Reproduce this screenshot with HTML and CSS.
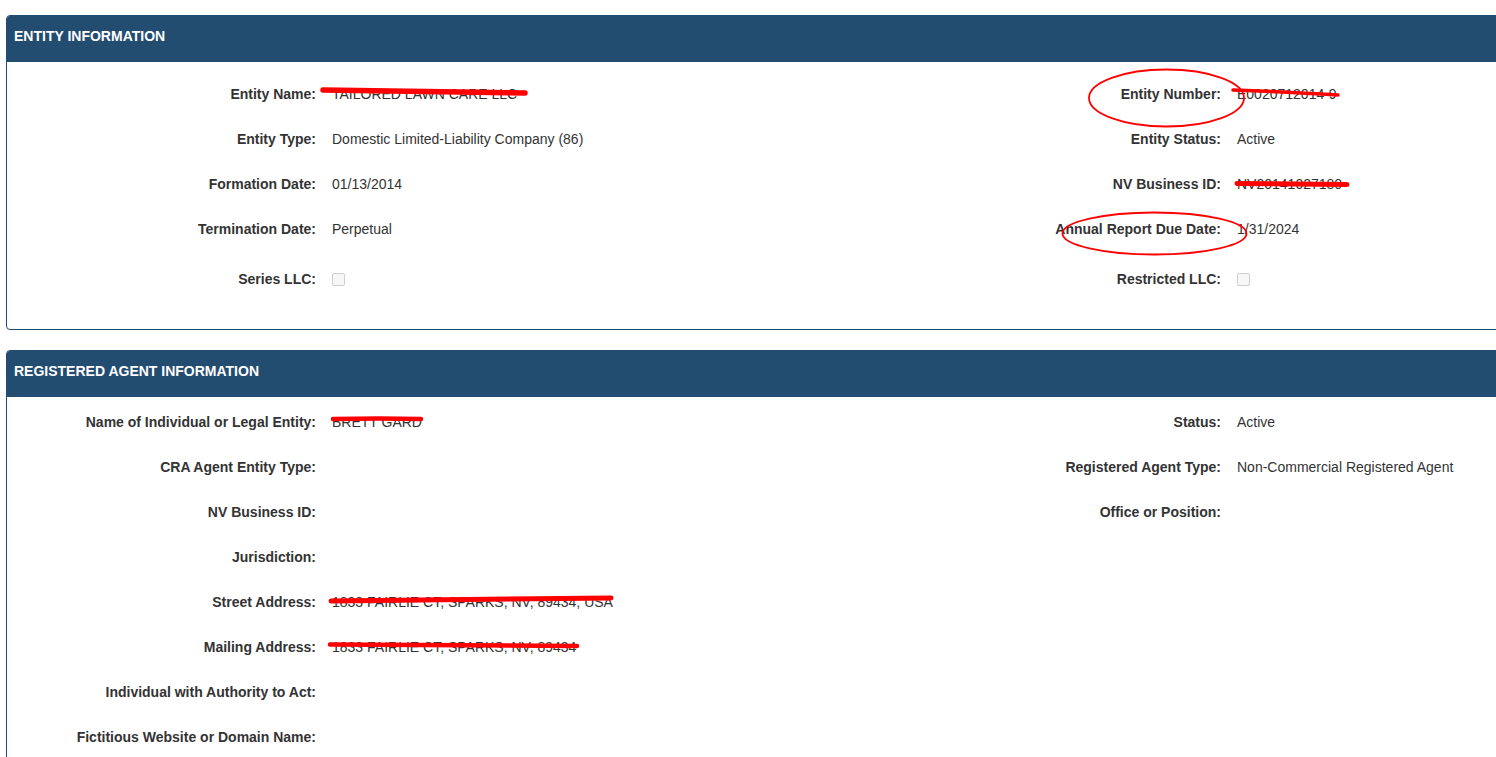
FILE: index.html
```html
<!DOCTYPE html>
<html lang="en">
<head>
    <meta charset="UTF-8">
    <meta name="viewport" content="width=device-width, initial-scale=1.0">
    <title>Entity Details</title>
    <link rel="stylesheet" href="styles.css">
</head>
<body>

    <div class="page">

        <!-- Entity information -->
        <div class="panel">
            <div class="panel-heading">ENTITY INFORMATION</div>
            <div class="panel-body entity-body">
                <div class="field-row">
                    <div class="field"><label>Entity Name:</label><span>TAILORED LAWN CARE LLC</span></div>
                    <div class="field"><label>Entity Number:</label><span>E0020712014-9</span></div>
                </div>
                <div class="field-row">
                    <div class="field"><label>Entity Type:</label><span>Domestic Limited-Liability Company (86)</span></div>
                    <div class="field"><label>Entity Status:</label><span>Active</span></div>
                </div>
                <div class="field-row">
                    <div class="field"><label>Formation Date:</label><span>01/13/2014</span></div>
                    <div class="field"><label>NV Business ID:</label><span>NV20141027180</span></div>
                </div>
                <div class="field-row">
                    <div class="field"><label>Termination Date:</label><span>Perpetual</span></div>
                    <div class="field"><label>Annual Report Due Date:</label><span>1/31/2024</span></div>
                </div>
                <div class="field-row check-row">
                    <div class="field"><label>Series LLC:</label><span><input type="checkbox" class="check" disabled></span></div>
                    <div class="field"><label>Restricted LLC:</label><span><input type="checkbox" class="check" disabled></span></div>
                </div>
            </div>
        </div>

        <!-- Registered agent -->
        <div class="panel">
            <div class="panel-heading">REGISTERED AGENT INFORMATION</div>
            <div class="panel-body agent-body">
                <div class="field-row">
                    <div class="field"><label>Name of Individual or Legal Entity:</label><span>BRETT GARD</span></div>
                    <div class="field"><label>Status:</label><span>Active</span></div>
                </div>
                <div class="field-row">
                    <div class="field"><label>CRA Agent Entity Type:</label><span></span></div>
                    <div class="field"><label>Registered Agent Type:</label><span>Non-Commercial Registered Agent</span></div>
                </div>
                <div class="field-row">
                    <div class="field"><label>NV Business ID:</label><span></span></div>
                    <div class="field"><label>Office or Position:</label><span></span></div>
                </div>
                <div class="field-row">
                    <div class="field"><label>Jurisdiction:</label><span></span></div>
                    <div></div>
                </div>
                <div class="field-row">
                    <div class="field"><label>Street Address:</label><span>1833 FAIRLIE CT, SPARKS, NV, 89434, USA</span></div>
                    <div></div>
                </div>
                <div class="field-row">
                    <div class="field"><label>Mailing Address:</label><span>1833 FAIRLIE CT, SPARKS, NV, 89434</span></div>
                    <div></div>
                </div>
                <div class="field-row">
                    <div class="field"><label>Individual with Authority to Act:</label><span></span></div>
                    <div></div>
                </div>
                <div class="field-row">
                    <div class="field"><label>Fictitious Website or Domain Name:</label><span></span></div>
                    <div></div>
                </div>
            </div>
        </div>

    </div>

    <!-- hand-drawn markup over the page -->
    <svg class="markup" width="1496" height="757" viewBox="0 0 1496 757">
        <g fill="none" stroke="#f00" stroke-linecap="round">
            <path d="M323 90 Q420 91 525 93" stroke-width="5.5"/>
            <ellipse cx="1166.5" cy="98" rx="77.5" ry="28.5" stroke-width="1.8"/>
            <path d="M1233 90 Q1290 92 1338 95" stroke-width="3.5"/>
            <path d="M1237 183.5 L1347 184.5" stroke-width="5"/>
            <ellipse cx="1154.5" cy="233.5" rx="92" ry="21" stroke-width="1.8"/>
            <path d="M333 419 Q380 418 421 419" stroke-width="4.5"/>
            <path d="M331 601 Q470 600 611 598" stroke-width="5"/>
            <path d="M330 644.5 Q455 645 577 646" stroke-width="4.5"/>
        </g>
    </svg>

</body>
</html>
```

FILE: styles.css
```css
html, body {
    margin: 0;
    padding: 0;
    overflow: hidden;
}
body {
    position: relative;
    font-family: "Liberation Sans", Arial, Helvetica, sans-serif;
    font-size: 14px;
    color: #333;
    background-color: #fff;
}
.page {
    padding: 15px 0 0 6px;
}
.panel {
    width: 1812px;
    margin-bottom: 20px;
    border: 1px solid #234c71;
    border-radius: 4px;
    background: #fff;
}
.panel-heading {
    background-color: #234c71;
    color: #fff;
    font-weight: bold;
    line-height: 20px;
    padding: 10px 7px 16px;
    border-radius: 3px 3px 0 0;
}
.panel-body {
    display: flex;
    flex-direction: column;
}
.entity-body {
    padding: 9px 0 28px;
}
.agent-body {
    padding: 2px 0 20px;
}
.field-row {
    display: grid;
    grid-template-columns: 905px 905px;
    height: 45px;
    align-items: center;
}
.check-row {
    margin-top: 5px;
}
.field {
    display: grid;
    grid-template-columns: 309px 1fr;
    column-gap: 16px;
    align-items: center;
    line-height: 20px;
}
.field label {
    text-align: right;
    font-weight: bold;
    white-space: nowrap;
}
.field span {
    white-space: nowrap;
}
.check {
    -webkit-appearance: none;
    appearance: none;
    display: block;
    width: 13px;
    height: 13px;
    margin: 1px 0 0;
    border: 1px solid #cfcfcf;
    border-radius: 2px;
    background: #f7f7f7;
}
.markup {
    position: absolute;
    top: 0;
    left: 0;
    pointer-events: none;
}
```
